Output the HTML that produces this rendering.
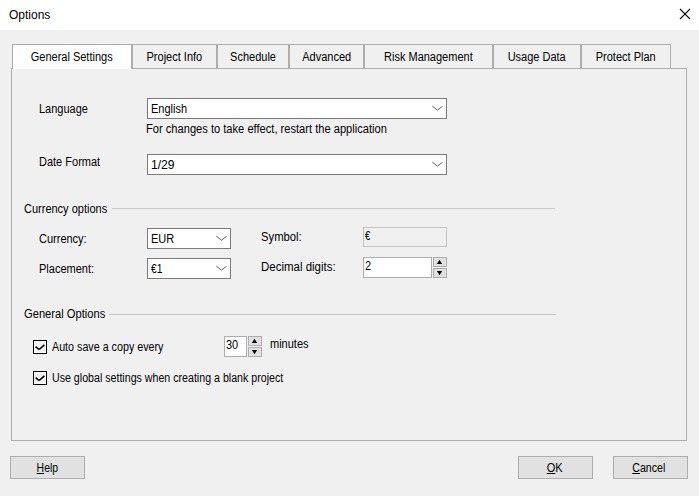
<!DOCTYPE html>
<html><head><meta charset="utf-8">
<style>
html,body{margin:0;padding:0;}
body{width:699px;height:496px;position:relative;overflow:hidden;background:#f0f0f0;font-family:"Liberation Sans",sans-serif;font-size:11px;color:#000;}
.a{position:absolute;}
.t{position:absolute;white-space:pre;line-height:13px;font-size:12px;transform:scaleX(0.9167);transform-origin:0 0;}
#title{position:absolute;left:0;top:0;width:699px;height:30px;background:#fff;}
.tab{position:absolute;top:44px;height:24px;box-sizing:border-box;border:1px solid #adadad;border-bottom:none;background:#f0f0f0;text-align:center;line-height:25px;}
.tab.sel{background:#fff;height:25px;z-index:2;}
#panel{position:absolute;left:11px;top:68px;width:676px;height:373px;box-sizing:border-box;border:1px solid #adadad;background:#f0f0f0;}
.combo{position:absolute;box-sizing:border-box;border:1px solid #7a7a7a;background:#fff;}
.chev{position:absolute;width:11px;height:6px;}
.btn{position:absolute;top:456px;width:75px;height:23px;box-sizing:border-box;border:1px solid #adadad;background:#e1e1e1;text-align:center;line-height:23px;}
.u{text-decoration:underline;}
.s{display:inline-block;font-size:12px;transform:scaleX(0.9167);}
.sep{position:absolute;height:1px;background:#c8c8c8;}
.spin{position:absolute;box-sizing:border-box;border:1px solid #adadad;background:#e1e1e1;width:14px;height:10px;}
.chk{position:absolute;box-sizing:border-box;width:14px;height:14px;border:1px solid #000;background:#f0f0f0;box-shadow:inset 0 0 0 1px #fff;}
</style></head><body>
<div id="title"><div class="t" style="left:9px;top:8px;font-size:12px;line-height:15px;transform:none;">Options</div>
<svg class="a" style="left:679px;top:8px" width="12" height="12" viewBox="0 0 12 12"><path d="M1 1L11 11M11 1L1 11" stroke="#000" stroke-width="1.1" fill="none"/></svg>
</div>

<div id="panel"></div>
<div class="tab sel" style="left:12px;width:120px;"><span class="s">General Settings</span></div>
<div class="tab" style="left:132px;width:85px;"><span class="s">Project Info</span></div>
<div class="tab" style="left:217px;width:72px;"><span class="s">Schedule</span></div>
<div class="tab" style="left:289px;width:75px;"><span class="s">Advanced</span></div>
<div class="tab" style="left:364px;width:129px;"><span class="s">Risk Management</span></div>
<div class="tab" style="left:493px;width:88px;"><span class="s">Usage Data</span></div>
<div class="tab" style="left:581px;width:90px;"><span class="s">Protect Plan</span></div>

<div class="t" style="left:39px;top:103px;">Language</div>
<div class="combo" style="left:147px;top:98px;width:300px;height:21px;"></div>
<div class="t" style="left:151px;top:103px;">English</div>
<svg class="chev" style="left:432px;top:105px" viewBox="0 0 11 6"><path d="M0.3 1.2L5.5 5.2L10.7 1.2" stroke="#606060" fill="none"/></svg>
<div class="t" style="left:146px;top:123px;transform:scaleX(0.9268)">For changes to take effect, restart the application</div>

<div class="t" style="left:39px;top:156px;">Date Format</div>
<div class="combo" style="left:147px;top:154px;width:300px;height:21px;"></div>
<div class="t" style="left:151px;top:159px;;transform:scaleX(1.0084)">1/29</div>
<svg class="chev" style="left:432px;top:161px" viewBox="0 0 11 6"><path d="M0.3 1.2L5.5 5.2L10.7 1.2" stroke="#606060" fill="none"/></svg>

<div class="t" style="left:24px;top:203px;">Currency options</div>
<div class="sep" style="left:112px;top:208px;width:443px;"></div>

<div class="t" style="left:39px;top:233px;">Currency:</div>
<div class="combo" style="left:147px;top:228px;width:84px;height:21px;"></div>
<div class="t" style="left:151px;top:233px;">EUR</div>
<svg class="chev" style="left:216px;top:235px" viewBox="0 0 11 6"><path d="M0.3 1.2L5.5 5.2L10.7 1.2" stroke="#606060" fill="none"/></svg>

<div class="t" style="left:39px;top:263px;">Placement:</div>
<div class="combo" style="left:147px;top:258px;width:84px;height:21px;"></div>
<div class="t" style="left:151px;top:263px;transform:scaleX(0.86)">€1</div>
<svg class="chev" style="left:216px;top:265px" viewBox="0 0 11 6"><path d="M0.3 1.2L5.5 5.2L10.7 1.2" stroke="#606060" fill="none"/></svg>

<div class="t" style="left:261px;top:231px;;transform:scaleX(0.9396)">Symbol:</div>
<div class="a" style="left:363px;top:227px;width:84px;height:20px;box-sizing:border-box;border:1px solid #c4c4c4;background:#f0f0f0;"></div>
<div class="t" style="left:365px;top:230px;transform:scaleX(0.8)">€</div>

<div class="t" style="left:261px;top:261px;;transform:scaleX(0.9570)">Decimal digits:</div>
<div class="a" style="left:363px;top:257px;width:69px;height:21px;box-sizing:border-box;border:1px solid #abadb3;background:#fff;"></div>
<div class="t" style="left:365px;top:260px;">2</div>
<div class="spin" style="left:433px;top:257px;"></div><svg class="a" style="left:433px;top:257px" width="14" height="10" viewBox="0 0 14 10"><path d="M3.9 7H9.1L6.5 2.7Z" fill="#000"/></svg>
<div class="spin" style="left:433px;top:268px;"></div><svg class="a" style="left:433px;top:268px" width="14" height="10" viewBox="0 0 14 10"><path d="M3.9 3H9.1L6.5 7.2Z" fill="#000"/></svg>

<div class="t" style="left:24px;top:308px;transform:scaleX(0.93)">General Options</div>
<div class="sep" style="left:109px;top:314px;width:447px;"></div>

<div class="chk" style="left:33px;top:340px;"></div><svg class="a" style="left:33px;top:340px" width="14" height="14" viewBox="0 0 14 14"><path d="M2.6 6.6L5.4 9H6.7L11.4 4.8" stroke="#000" stroke-width="1.6" fill="none"/></svg>
<div class="t" style="left:52px;top:341px;;transform:scaleX(0.8938)">Auto save a copy every</div>
<div class="a" style="left:224px;top:336px;width:23px;height:21px;box-sizing:border-box;border:1px solid #abadb3;background:#fff;"></div>
<div class="t" style="left:226px;top:339px;">30</div>
<div class="spin" style="left:248px;top:336px;"></div><svg class="a" style="left:248px;top:336px" width="14" height="10" viewBox="0 0 14 10"><path d="M3.9 7H9.1L6.5 2.7Z" fill="#000"/></svg>
<div class="spin" style="left:248px;top:347px;"></div><svg class="a" style="left:248px;top:347px" width="14" height="10" viewBox="0 0 14 10"><path d="M3.9 3H9.1L6.5 7.2Z" fill="#000"/></svg>
<div class="t" style="left:270px;top:338px;">minutes</div>

<div class="chk" style="left:33px;top:371px;"></div><svg class="a" style="left:33px;top:371px" width="14" height="14" viewBox="0 0 14 14"><path d="M2.6 6.6L5.4 9H6.7L11.4 4.8" stroke="#000" stroke-width="1.6" fill="none"/></svg>
<div class="t" style="left:52px;top:372px;;transform:scaleX(0.8864)">Use global settings when creating a blank project</div>

<div class="btn" style="left:10px;"><span class="s" style="transform:scaleX(0.87)"><span class="u">H</span>elp</span></div>
<div class="btn" style="left:518px;text-indent:-1px;"><span class="s"><span class="u">O</span>K</span></div>
<div class="btn" style="left:613px;text-indent:-2px;"><span class="s" style="transform:scaleX(0.885)"><span class="u">C</span>ancel</span></div>
</body></html>
